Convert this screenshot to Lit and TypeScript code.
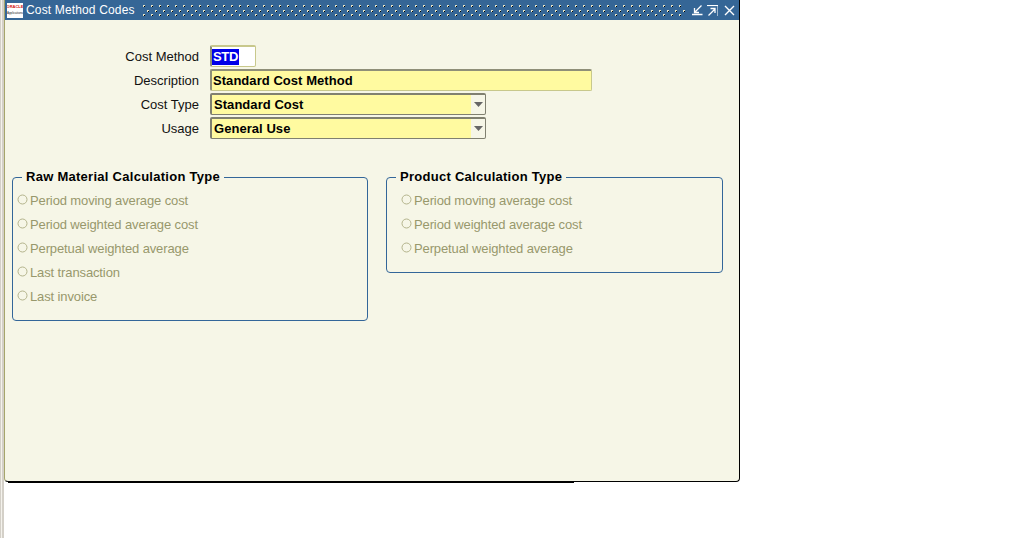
import { LitElement, html, css } from "lit";
import { customElement } from "lit/decorators.js";

const RAW = [
  "Period moving average cost",
  "Period weighted average cost",
  "Perpetual weighted average",
  "Last transaction",
  "Last invoice",
];
const PROD = RAW.slice(0, 3);

@customElement("app-root")
export class AppRoot extends LitElement {
  static styles = css`
    :host {
      display: flex;
      width: 1024px;
      height: 538px;
      background: #fff;
      font-family: "Liberation Sans", Arial, sans-serif;
      font-size: 13px;
      overflow: hidden;
    }
    .edge {
      width: 4px;
      flex: none;
      background: linear-gradient(90deg, #d4d0c8 0 1px, #f4f2ec 1px 2px, #d4d0c8 2px 4px);
    }
    .column { display: flex; flex-direction: column; width: 736px; }
    .window {
      height: 482px;
      flex: none;
      box-sizing: border-box;
      background: #f6f6e7;
      border-left: 1px solid #a5a56b;
      border-right: 1px solid #000;
      border-bottom: 1px solid #000;
      border-bottom-right-radius: 4px;
      border-bottom-left-radius: 4px;
      display: flex;
      flex-direction: column;
    }
    .title {
      height: 20px;
      flex: none;
      background: #356696;
      color: #fff;
      display: flex;
      align-items: center;
      padding-left: 2px;
    }
    .logo {
      width: 16px;
      height: 15px;
      background: #fff;
      flex: none;
      display: flex;
      flex-direction: column;
      align-items: center;
      overflow: hidden;
      margin-top: 1px;
      line-height: 1;
    }
    .logo .o { color: #d01010; font-size: 4px; font-weight: 700; margin-top: 2px; }
    .logo .a { color: #222; font-size: 3px; margin-top: 3px; white-space: nowrap; }
    .name { margin-left: 3px; width: 116px; flex: none; white-space: nowrap; font-size: 12px; letter-spacing: 0.15px; }
    .dots { flex: none; width: 544px; height: 14px; display: block; }
    .controls { display: flex; margin-left: 6px; align-items: center; }
    .controls svg { display: block; flex: none; }
    .controls .mx { margin-left: 4px; }
    .controls .cl { margin-left: 6px; }
    .form {
      display: grid;
      grid-template-columns: 194px 382px;
      grid-auto-rows: 24px;
      column-gap: 11px;
      padding-top: 24px;
      justify-content: start;
    }
    .lab { text-align: right; line-height: 25px; color: #111; }
    .cell { display: flex; align-items: center; height: 24px; }
    .input {
      box-sizing: border-box;
      height: 22px;
      border: 1px solid #c8c88c;
      border-top: 2px solid #8f8f78;
      border-left: 2px solid #8f8f78;
      border-radius: 2px;
      background: #fffaa0;
      font-weight: 700;
      line-height: 19px;
      color: #000;
      padding-left: 1px;
      letter-spacing: 0.05px;
    }
    .std { width: 46px; background: #fff; padding-left: 0; border-top-color: #c8c88c; border-left-color: #8f8f78; }
    .std span { background: #0000e8; color: #fff; display: inline-block; line-height: 16px; margin-left: 0; padding: 0 1px; letter-spacing: -0.3px; }
    .desc { width: 382px; }
    .select {
      box-sizing: border-box;
      width: 276px;
      height: 22px;
      border: 1px solid #808070;
      border-top-width: 2px;
      border-left-width: 2px;
      border-radius: 2px;
      display: flex;
      background: #f6f6e7;
    }
    .select .v {
      width: 259px;
      background: #fffaa0;
      font-weight: 700;
      line-height: 19px;
      padding-left: 2px;
      box-sizing: border-box;
      letter-spacing: 0.05px;
    }
    .select .btn { flex: 1; display: flex; align-items: center; justify-content: center; }
    .groups {
      display: flex;
      gap: 18px;
      padding-left: 7px;
      margin-top: 29px;
      align-items: flex-start;
    }
    fieldset {
      margin: 0;
      box-sizing: border-box;
      border: 1px solid #336699;
      border-radius: 4px;
      padding: 0;
      min-width: 0;
    }
    .raw { width: 356px; height: 152px; }
    .prod { width: 337px; height: 104px; }
    .prod .opt { padding-left: 14px; }
    legend {
      font-weight: 700;
      color: #000;
      padding: 0 4px;
      margin-left: 9px;
      line-height: 16px;
      letter-spacing: 0.27px;
    }
    .opt {
      display: flex;
      align-items: center;
      height: 24px;
      padding-left: 4px;
      color: #98986c;
      letter-spacing: -0.12px;
    }
    .opt svg { margin-right: 2px; margin-top: -3px; display: block; flex: none; }
    .opt span { margin-top: -2px; }
    .opts { margin-top: 4px; }
    .under {
      height: 1px;
      width: 566px;
      margin-left: 4px;
      background: #000;
      flex: none;
    }
  `;

  private radio() {
    return html`<svg width="11" height="11" viewBox="0 0 11 11">
      <circle cx="5.5" cy="5.5" r="4.5" fill="#f6f6e7" stroke="#b4b48c" stroke-width="1"></circle>
    </svg>`;
  }

  private group(title: string, opts: string[], cls: string) {
    return html`<fieldset class=${cls}>
      <legend>${title}</legend>
      <div class="opts">
        ${opts.map((o) => html`<div class="opt">${this.radio()}<span>${o}</span></div>`)}
      </div>
    </fieldset>`;
  }

  private arrow() {
    return html`<svg width="9" height="5" viewBox="0 0 9 5"><path d="M0 0h9L4.5 5z" fill="#666"></path></svg>`;
  }

  render() {
    return html`
      <div class="edge"></div>
      <div class="column">
        <div class="window">
          <div class="title">
            <div class="logo"><span class="o">ORACLE</span><span class="a">Applications</span></div>
            <span class="name">Cost Method Codes</span>
            <svg class="dots" viewBox="0 0 544 14">
              <defs>
                <pattern id="d" width="8" height="9" patternUnits="userSpaceOnUse">
                  <rect x="1" y="2" width="2" height="2" fill="#e4e4c8"></rect>
                  <rect x="2" y="3" width="1" height="1" fill="#000"></rect>
                  <rect x="5" y="7" width="2" height="2" fill="#e4e4c8"></rect>
                  <rect x="6" y="8" width="1" height="1" fill="#000"></rect>
                </pattern>
              </defs>
              <rect width="544" height="14" fill="url(#d)"></rect>
            </svg>
            <div class="controls">
              <svg width="11" height="11" viewBox="0 0 11 11" fill="none" stroke="#fff">
                <path d="M0 9.5h10.5M9.5 0.5L3 7M2.5 3v4.5H7" stroke-width="1.3"></path>
              </svg>
              <svg class="mx" width="11" height="11" viewBox="0 0 11 11" fill="none" stroke="#fff">
                <path d="M0 0.5h11" stroke-width="1.2"></path>
                <path d="M10.5 1v10" stroke="#9fb6cc" stroke-width="1"></path>
                <path d="M1.5 10.5L8 4M3.5 3.5h4.5V8" stroke-width="1.3"></path>
              </svg>
              <svg class="cl" width="11" height="11" viewBox="0 0 11 11" fill="none" stroke="#fff">
                <path d="M1 1l9 9M10 1l-9 9" stroke-width="1.4"></path>
              </svg>
            </div>
          </div>
          <div class="form">
            <div class="lab">Cost Method</div>
            <div class="cell"><div class="input std"><span>STD</span></div></div>
            <div class="lab">Description</div>
            <div class="cell"><div class="input desc">Standard Cost Method</div></div>
            <div class="lab">Cost Type</div>
            <div class="cell"><div class="select"><div class="v">Standard Cost</div><div class="btn">${this.arrow()}</div></div></div>
            <div class="lab">Usage</div>
            <div class="cell"><div class="select"><div class="v">General Use</div><div class="btn">${this.arrow()}</div></div></div>
          </div>
          <div class="groups">
            ${this.group("Raw Material Calculation Type", RAW, "raw")}
            ${this.group("Product Calculation Type", PROD, "prod")}
          </div>
        </div>
        <div class="under"></div>
      </div>
    `;
  }
}
